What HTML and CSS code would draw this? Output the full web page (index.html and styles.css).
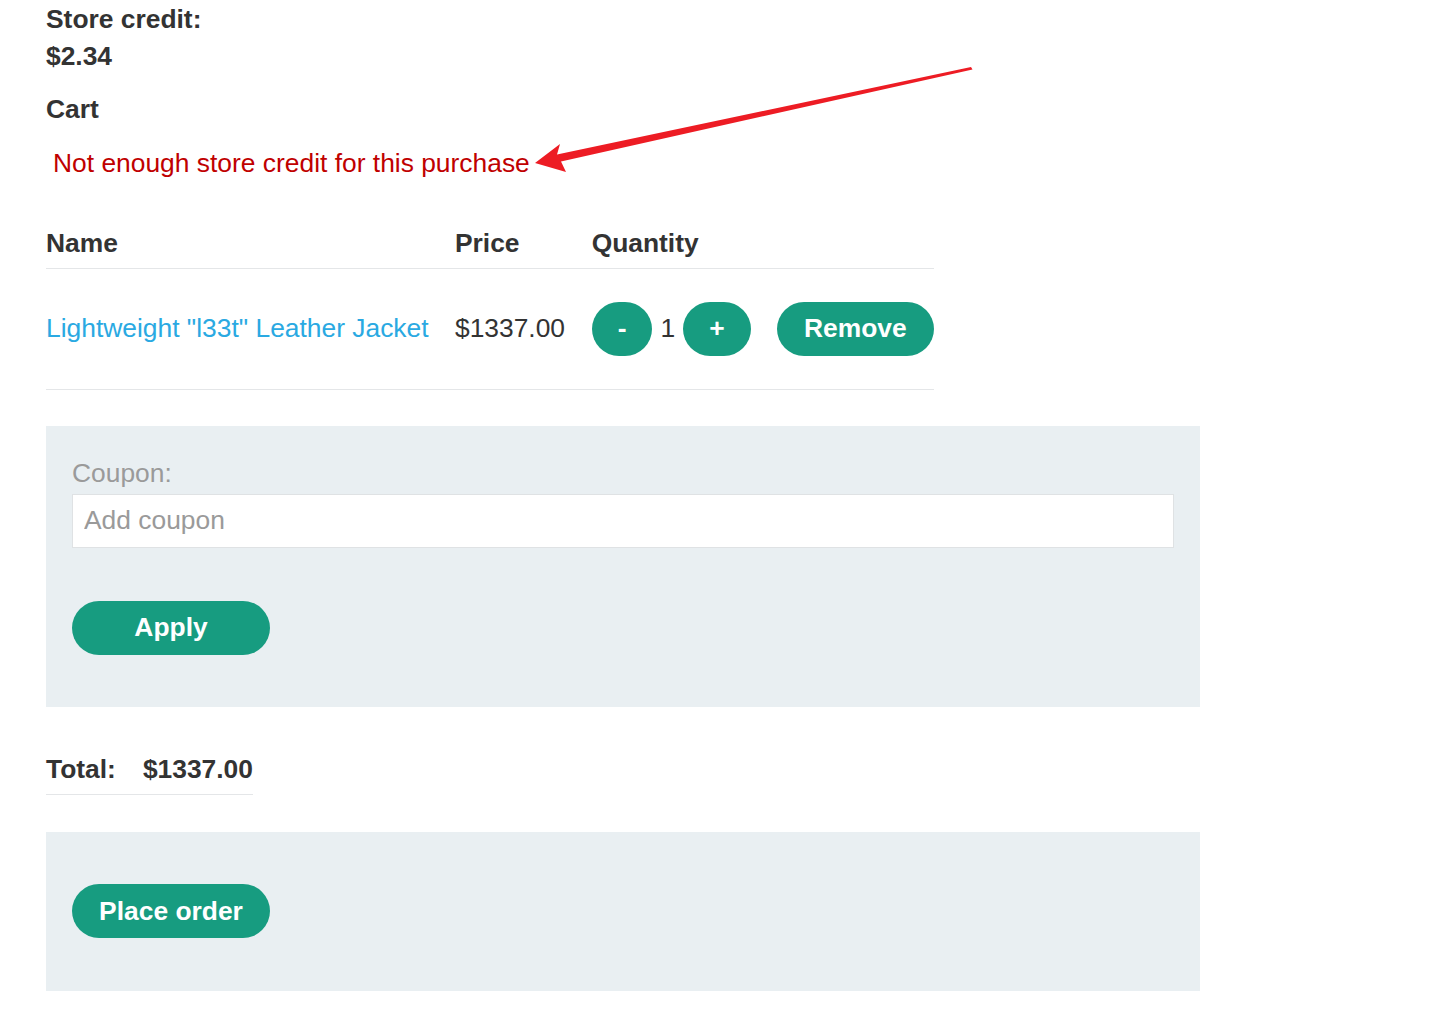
FILE: index.html
```html
<!DOCTYPE html>
<html>
<head>
<meta charset="utf-8">
<title>Cart</title>
<link rel="stylesheet" href="styles.css">
</head>
<body>
<div class="page">
  <div class="credit">
    <div>Store credit:</div>
    <div>$2.34</div>
  </div>
  <h2 class="cart-title">Cart</h2>
  <p class="error">Not enough store credit for this purchase</p>

  <table class="cart">
    <thead>
      <tr><th>Name</th><th class="price">Price</th><th>Quantity</th><th></th></tr>
    </thead>
    <tbody>
      <tr>
        <td><a class="product" href="#">Lightweight "l33t" Leather Jacket</a></td>
        <td class="price">$1337.00</td>
        <td>
          <div class="qty">
            <button class="btn">-</button>
            <span>1</span>
            <button class="btn">+</button>
          </div>
        </td>
        <td><button class="btn btn-remove">Remove</button></td>
      </tr>
    </tbody>
  </table>

  <form class="panel coupon">
    <label class="coupon-label" for="coupon">Coupon:</label>
    <input id="coupon" class="coupon-input" type="text" placeholder="Add coupon">
    <button type="button" class="btn btn-wide">Apply</button>
  </form>

  <table class="total">
    <tr><th>Total:</th><th>$1337.00</th></tr>
  </table>

  <form class="panel order">
    <button type="button" class="btn btn-wide">Place order</button>
  </form>
</div>

<svg class="arrow" width="1000" height="200" viewBox="0 0 1000 200">
  <polygon fill="#ed1c24" points="535,163 560,144 557,154.5 971,67 972.5,69.5 561,161.5 566,172"/>
</svg>
</body>
</html>
```

FILE: styles.css
```css
html, body {
  margin: 0;
  padding: 0;
  background: #ffffff;
}

body {
  font-family: "Liberation Sans", Arial, sans-serif;
  font-size: 26.4px;
  line-height: 37px;
  color: #333333;
  position: relative;
}

.page {
  padding: 0 0 30px 46px;
}

.credit {
  font-weight: bold;
  padding-top: 0.5px;
}

.cart-title {
  font-size: 26.4px;
  line-height: 37px;
  font-weight: bold;
  margin: 16px 0 0 0;
}

.error {
  color: #c00000;
  margin: 17px 0 36.5px 0;
  padding-left: 7px;
}

table {
  border-collapse: collapse;
  border-spacing: 0;
}

.cart {
  margin-bottom: 36px;
}

.cart th {
  text-align: left;
  font-weight: bold;
  padding: 6.5px 26.4px 6px 0;
  border-bottom: 1px solid #e4e6e8;
  white-space: nowrap;
}

.cart td {
  padding: 33px 26.4px 33px 0;
  border-bottom: 1px solid #e4e6e8;
  vertical-align: middle;
  white-space: nowrap;
}

.cart th.price,
.cart td.price {
  padding-right: 26.6px;
}

.cart th:last-child,
.cart td:last-child {
  padding-right: 0;
}

.product {
  color: #2aa9e2;
  text-decoration: none;
}

.qty {
  display: flex;
  align-items: center;
  gap: 8px;
}

.btn {
  font-family: "Liberation Sans", Arial, sans-serif;
  font-size: 26.4px;
  font-weight: bold;
  line-height: 37px;
  height: 54px;
  padding: 0 26px;
  border: none;
  border-radius: 27px;
  background: #179c80;
  color: #ffffff;
  cursor: pointer;
  display: inline-block;
}

.btn-remove {
  padding: 0 27px 0 27px;
}

.btn-wide {
  min-width: 198px;
  display: block;
}

.panel {
  background: #e9eff2;
  margin: 0;
  width: 1102px;
}

.coupon {
  padding: 29px 26px 52px 26px;
}

.coupon-label {
  display: block;
  color: #9a9a9a;
  margin-bottom: 2px;
}

.coupon-input {
  display: block;
  box-sizing: border-box;
  width: 100%;
  height: 54px;
  margin: 0 0 53px 0;
  padding: 0 11px;
  border: 1px solid #dfe2e4;
  background: #ffffff;
  font-family: "Liberation Sans", Arial, sans-serif;
  font-size: 26.4px;
  color: #333333;
  outline: none;
}

.coupon-input::placeholder {
  color: #9a9a9a;
}

.total {
  margin: 38px 0 37px 0;
}

.total th {
  text-align: left;
  font-weight: bold;
  padding: 6.5px 27px 6px 0;
  border-bottom: 1px solid #e4e6e8;
  white-space: nowrap;
}

.total th:last-child {
  padding-right: 0;
}

.order {
  padding: 52px 26px 53px 26px;
}

.arrow {
  position: absolute;
  left: 0;
  top: 0;
  pointer-events: none;
}
```
